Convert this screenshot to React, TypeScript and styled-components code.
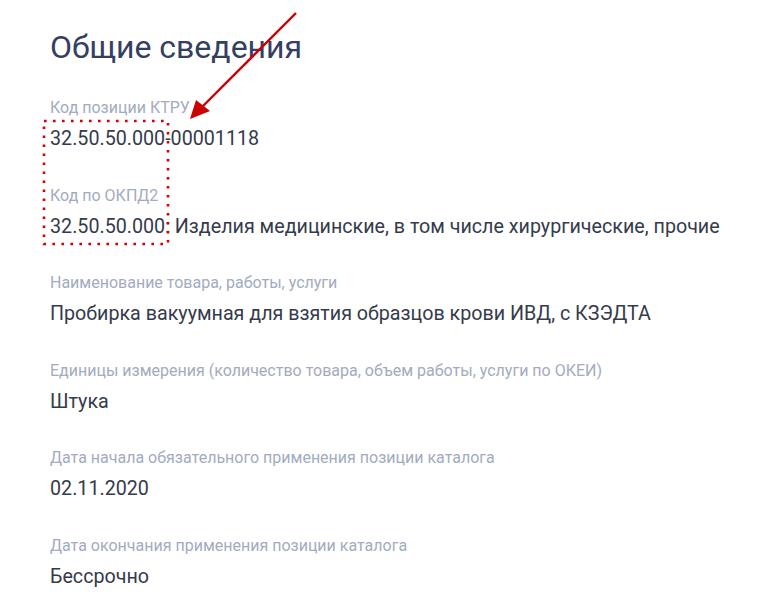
import React from "react";
import styled, { createGlobalStyle } from "styled-components";

const Global = createGlobalStyle`
  html, body { margin: 0; padding: 0; background: #ffffff; }
  body { font-family: Roboto, "Noto Sans", Arial, sans-serif; }
`;

const Page = styled.div`
  position: relative;
  width: 765px;
  height: 594px;
  overflow: hidden;
  background: #ffffff;
  padding: 29px 0 0 50px;
  box-sizing: border-box;
`;

const Title = styled.h1`
  margin: 0 0 33px 0;
  font-family: Roboto, sans-serif;
  font-weight: 400;
  font-size: 32px;
  line-height: 36px;
  color: #334063;
`;

const Fields = styled.div`
  display: flex;
  flex-direction: column;
  gap: 34.5px;
`;

const Field = styled.div`
  display: flex;
  flex-direction: column;
`;

const Label = styled.div`
  font-size: 16px;
  line-height: 20px;
  color: #a3abbf;
  margin-bottom: 9px;
`;

const Value = styled.div`
  font-size: 19.7px;
  line-height: 24px;
  color: #353b4b;
  white-space: nowrap;
`;

const Overlay = styled.svg`
  position: absolute;
  left: 0;
  top: 0;
  pointer-events: none;
`;

const fields: [string, string][] = [
  ["Код позиции КТРУ", "32.50.50.000-00001118"],
  ["Код по ОКПД2", "32.50.50.000: Изделия медицинские, в том числе хирургические, прочие"],
  ["Наименование товара, работы, услуги", "Пробирка вакуумная для взятия образцов крови ИВД, с КЗЭДТА"],
  ["Единицы измерения (количество товара, объем работы, услуги по ОКЕИ)", "Штука"],
  ["Дата начала обязательного применения позиции каталога", "02.11.2020"],
  ["Дата окончания применения позиции каталога", "Бессрочно"],
];

export default function App() {
  return (
    <>
      <Global />
      <Page>
        <Title>Общие сведения</Title>
        <Fields>
          {fields.map(([l, v]) => (
            <Field key={l}>
              <Label>{l}</Label>
              <Value>{v}</Value>
            </Field>
          ))}
        </Fields>
        <Overlay width={765} height={594} viewBox="0 0 765 594">
          <rect
            x={44}
            y={121}
            width={124}
            height={123}
            fill="none"
            stroke="#d40000"
            strokeWidth={2.6}
            strokeDasharray="2.6 6.4"
          />
          <line x1={296} y1={13} x2={201} y2={108} stroke="#cc0000" strokeWidth={2.4} />
          <polygon points="190,119 196,100 210,111" fill="#cc0000" />
        </Overlay>
      </Page>
    </>
  );
}
